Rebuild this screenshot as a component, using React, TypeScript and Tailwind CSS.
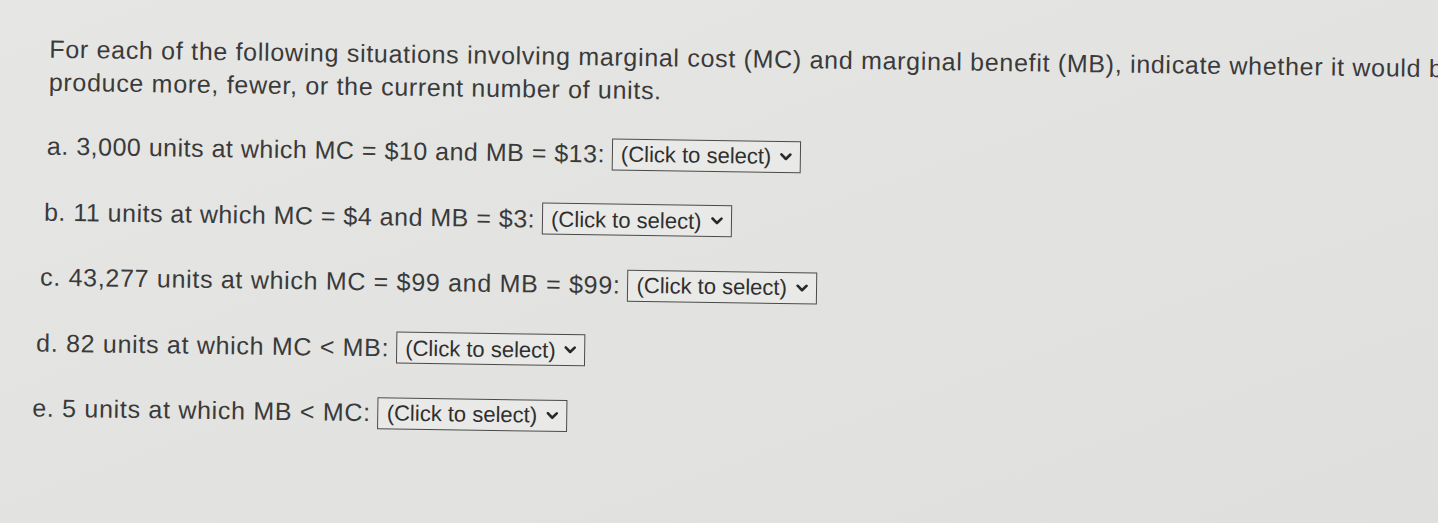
const items = [
    { id: "a", text: "a. 3,000 units at which MC = $10 and MB = $13:", row: "pl-[49px] tracking-[0.5px]" },
    { id: "b", text: "b. 11 units at which MC = $4 and MB = $3:", row: "pl-[47px] tracking-[0.5px]" },
    { id: "c", text: "c. 43,277 units at which MC = $99 and MB = $99:", row: "pl-[44px] tracking-[0.7px]" },
    { id: "d", text: "d. 82 units at which MC < MB:", row: "pl-[41px] tracking-[0.7px]" },
    { id: "e", text: "e. 5 units at which MB < MC:", row: "pl-[38px] tracking-[0.7px]" },
]

function SelectBox() {
    return (
        <div className="inline-flex items-center gap-[9px] border border-[#4a4a4a] bg-[#e9e9e7] h-[32px] px-[8px] ml-[7px] tracking-normal">
            <span className="text-[22px] text-[#2f2f2f]">(Click to select)</span>
            <svg width="12" height="8" viewBox="0 0 12 8" className="text-[#2a2a2a]">
                <polyline points="1.5,1.5 6,6 10.5,1.5" fill="none" stroke="currentColor" strokeWidth="2.6" strokeLinecap="round" strokeLinejoin="round" />
            </svg>
        </div>
    )
}

export default function App() {
    return (
        <div
            className="w-[1438px] h-[523px] overflow-hidden bg-gradient-to-br from-[#e6e6e4] to-[#dfdfdd]"
            style={{ fontFamily: "'Liberation Sans', Arial, sans-serif" }}
        >
            <div className="pt-[32px] rotate-[0.8deg] origin-top-left">
                {/* Question */}
                <p className="pl-[50px] text-[25px] leading-[33px] text-[#3a3a3a] whitespace-nowrap tracking-[0.7px]">
                    For each of the following situations involving marginal cost (MC) and marginal benefit (MB), indicate whether it would be better to
                    <br />
                    produce more, fewer, or the current number of units.
                </p>

                {/* Parts */}
                <div className="mt-[29px] flex flex-col gap-[28px]">
                    {items.map((item) => (
                        <div key={item.id} className={`flex items-center ${item.row}`}>
                            <span className="text-[25px] text-[#3a3a3a] whitespace-nowrap">{item.text}</span>
                            <SelectBox />
                        </div>
                    ))}
                </div>
            </div>
        </div>
    )
}
